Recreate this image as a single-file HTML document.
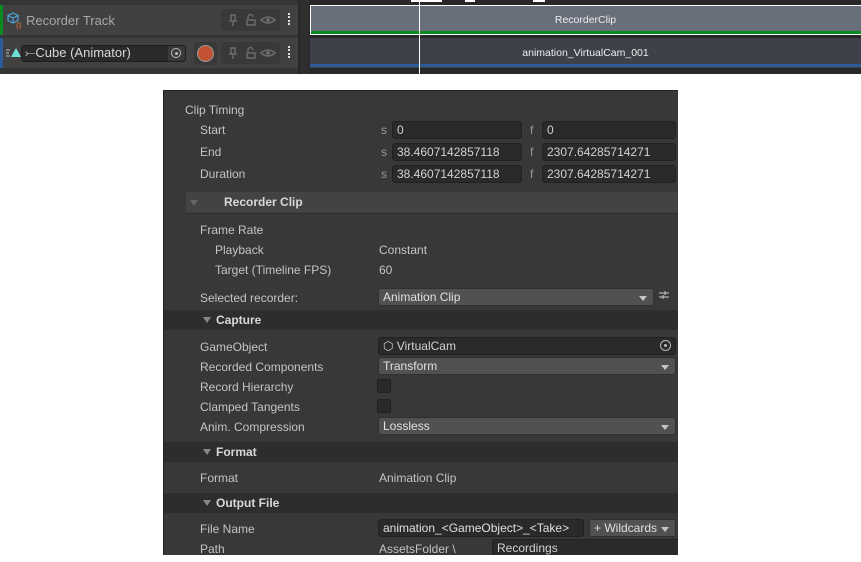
<!DOCTYPE html>
<html><head><style>
*{box-sizing:border-box;margin:0;padding:0}
body{width:861px;height:562px;background:#fff;position:relative;overflow:hidden;font-family:"Liberation Sans",sans-serif;font-size:12px;color:#c4c4c4}
.a{position:absolute}
.lbl{position:absolute;left:36px;white-space:nowrap}
.fld{position:absolute;background:#2a2a2a;border:1px solid #212121;border-radius:3px;height:18px;padding-left:4px;line-height:16px;color:#d2d2d2}
.dd{position:absolute;background:#515151;border:1px solid #303030;border-radius:3px;height:18px;padding-left:4px;line-height:16px;color:#e0e0e0}
.dd:after{content:"";position:absolute;right:6px;top:7px;border-left:4px solid transparent;border-right:4px solid transparent;border-top:5px solid #c4c4c4}
.hdr{position:absolute;left:0;width:514px;height:20px;background:#2d2d2d;font-weight:bold;color:#d8d8d8;line-height:20px;padding-left:52px}
.hdr:before{content:"";position:absolute;left:39px;top:7px;border-left:4px solid transparent;border-right:4px solid transparent;border-top:6px solid #888}
.cb{position:absolute;left:213px;width:14px;height:14px;background:#2a2a2a;border:1px solid #212121;border-radius:2px}
.btn{position:absolute;left:221px;width:59px;height:22px;background:#393939;border-radius:3px}
</style></head><body>
<div class="a" style="left:0;top:0;width:861px;height:74px;background:#282828"></div>
<div class="a" style="left:0;top:0;width:298px;height:74px;background:#353535"></div>
<div class="a" style="left:0;top:5px;width:298px;height:30px;background:#414141"></div>
<div class="a" style="left:0;top:5px;width:3px;height:30px;background:#0a8a1e"></div>
<div class="a" style="left:0;top:38px;width:298px;height:30px;background:#414141"></div>
<div class="a" style="left:0;top:38px;width:3px;height:30px;background:#2c5c98"></div>
<svg class="a" style="left:7px;top:11px" width="16" height="18"><path d="M6 2l5 2.5v5L6 12 1 9.5v-5z M1 4.5L6 7l5-2.5 M6 7v5" fill="none" stroke="#4ea4d8" stroke-width="1.2"/><text x="9" y="17" fill="#e36a3a" font-size="8">{}</text></svg>
<div class="a" style="left:26px;top:13px;font-size:13px;color:#a8a8a8">Recorder Track</div>
<div class="btn" style="top:9px"></div>
<svg class="a" style="left:221px;top:9px" width="59" height="22"><g fill="none" stroke="#6a6a6a" stroke-width="1.5"><path d="M9 6h6M10 6v6M14 6v6M8 12h8M12 12v5"/><path d="M27 10v-2a2.5 2.5 0 0 1 5 0M26 11h8v5h-8z"/><path d="M40 11q7-6 14 0q-7 6-14 0z"/></g><circle cx="47" cy="11" r="2" fill="#6a6a6a"/></svg>
<div class="a" style="left:288px;top:13px;width:2px;height:12px;border-left:2px dotted #ddd"></div>
<svg class="a" style="left:6px;top:46px" width="16" height="12"><path d="M0 4h4M0 7h3M0 10h4" stroke="#bbb"/><path d="M5 11L10 2l5 9z" fill="#6ee0d2"/></svg>
<div class="a" style="left:21px;top:45px;width:165px;height:17px;background:#2a2a2a;border:1px solid #1e1e1e;border-radius:3px"></div>
<div class="a" style="left:25px;top:45px;font-size:13px;color:#d8d8d8">⤚Cube (Animator)</div>
<div class="a" style="left:168px;top:46px;width:17px;height:15px;background:#3a3a3a;border-radius:0 3px 3px 0"></div>
<div class="a" style="left:171px;top:48px;width:10px;height:10px;border:1.5px solid #bbb;border-radius:50%"></div>
<div class="a" style="left:174.5px;top:51.5px;width:3px;height:3px;background:#bbb;border-radius:50%"></div>
<div class="a" style="left:194px;top:42px;width:23px;height:23px;background:#393939;border-radius:3px"></div>
<div class="a" style="left:197px;top:45px;width:17px;height:17px;border:1.5px solid #999;border-radius:50%;background:#c35234"></div>
<div class="btn" style="top:42px"></div>
<svg class="a" style="left:221px;top:42px" width="59" height="22"><g fill="none" stroke="#6a6a6a" stroke-width="1.5"><path d="M9 6h6M10 6v6M14 6v6M8 12h8M12 12v5"/><path d="M27 10v-2a2.5 2.5 0 0 1 5 0M26 11h8v5h-8z"/><path d="M40 11q7-6 14 0q-7 6-14 0z"/></g><circle cx="47" cy="11" r="2" fill="#6a6a6a"/></svg>
<div class="a" style="left:288px;top:46px;width:2px;height:12px;border-left:2px dotted #ddd"></div>
<div class="a" style="left:300px;top:0;width:9px;height:74px;background:#2e2e2e"></div>
<div class="a" style="left:310px;top:5px;width:551px;height:30px;background:#686f7b;border:1px solid #fff;border-right:none"></div>
<div class="a" style="left:311px;top:31px;width:550px;height:3px;background:#0a8a1e"></div>
<div class="a" style="left:310px;top:14px;width:551px;text-align:center;font-size:10.5px;color:#eee">RecorderClip</div>
<div class="a" style="left:310px;top:38px;width:551px;height:30px;background:#3e4149"></div>
<div class="a" style="left:310px;top:64px;width:551px;height:3px;background:#2c5c98"></div>
<div class="a" style="left:310px;top:47px;width:551px;text-align:center;font-size:10.5px;color:#eee">animation_VirtualCam_001</div>
<div class="a" style="left:419px;top:0;width:1px;height:74px;background:#fff"></div>
<div class="a" style="left:411px;top:0;width:31px;height:2px;background:#fff"></div>
<div class="a" style="left:465px;top:0;width:10px;height:2px;background:#fff"></div>
<div class="a" style="left:533px;top:0;width:12px;height:2px;background:#fff"></div>

<div class="a" style="left:163px;top:90px;width:515px;height:465px;background:#383838;border-left:1px solid #222;border-top:1px solid #222;overflow:hidden">
 <div class="lbl" style="left:21px;top:12px">Clip Timing</div>
 <div class="lbl" style="top:32px">Start</div>
 <div class="lbl" style="top:54px">End</div>
 <div class="lbl" style="top:76px">Duration</div>
 <div class="lbl" style="left:217px;top:32px;color:#999">s</div>
 <div class="lbl" style="left:217px;top:54px;color:#999">s</div>
 <div class="lbl" style="left:217px;top:76px;color:#999">s</div>
 <div class="lbl" style="left:366px;top:32px;color:#999">f</div>
 <div class="lbl" style="left:366px;top:54px;color:#999">f</div>
 <div class="lbl" style="left:366px;top:76px;color:#999">f</div>
 <div class="fld" style="left:228px;top:30px;width:130px">0</div>
 <div class="fld" style="left:378px;top:30px;width:134px">0</div>
 <div class="fld" style="left:228px;top:52px;width:130px">38.4607142857118</div>
 <div class="fld" style="left:378px;top:52px;width:134px">2307.64285714271</div>
 <div class="fld" style="left:228px;top:74px;width:130px">38.4607142857118</div>
 <div class="fld" style="left:378px;top:74px;width:134px">2307.64285714271</div>
 <div class="a" style="left:22px;top:101px;width:492px;height:22px;background:#434343;border-bottom:1px solid #2a2a2a;font-weight:bold;color:#d8d8d8;line-height:20px;padding-left:38px">Recorder Clip</div>
 <div class="a" style="left:26px;top:109px;border-left:4px solid transparent;border-right:4px solid transparent;border-top:6px solid #666"></div>
 <div class="lbl" style="top:132px">Frame Rate</div>
 <div class="lbl" style="left:51px;top:152px">Playback</div>
 <div class="lbl" style="left:215px;top:152px">Constant</div>
 <div class="lbl" style="left:51px;top:172px">Target (Timeline FPS)</div>
 <div class="lbl" style="left:215px;top:172px">60</div>
 <div class="lbl" style="top:200px">Selected recorder:</div>
 <div class="dd" style="left:214px;top:197px;width:276px">Animation Clip</div>
 <svg class="a" style="left:495px;top:199px" width="10" height="10"><path d="M0 3h10M0 7h10M6 1v4M4 5v4" stroke="#ccc" stroke-width="1"/></svg>
 <div class="hdr" style="top:219px">Capture</div>
 <div class="lbl" style="top:249px">GameObject</div>
 <div class="fld" style="left:214px;top:246px;width:298px">⬡ VirtualCam</div>
 <div class="a" style="left:496px;top:249px;width:11px;height:11px;border:1.5px solid #bbb;border-radius:50%"></div>
 <div class="a" style="left:500px;top:253px;width:3px;height:3px;background:#bbb;border-radius:50%"></div>
 <div class="lbl" style="top:269px">Recorded Components</div>
 <div class="dd" style="left:214px;top:266px;width:298px">Transform</div>
 <div class="lbl" style="top:289px">Record Hierarchy</div>
 <div class="cb" style="top:288px"></div>
 <div class="lbl" style="top:309px">Clamped Tangents</div>
 <div class="cb" style="top:308px"></div>
 <div class="lbl" style="top:329px">Anim. Compression</div>
 <div class="dd" style="left:214px;top:326px;width:298px">Lossless</div>
 <div class="hdr" style="top:351px">Format</div>
 <div class="lbl" style="top:380px">Format</div>
 <div class="lbl" style="left:215px;top:380px">Animation Clip</div>
 <div class="hdr" style="top:402px">Output File</div>
 <div class="lbl" style="top:431px">File Name</div>
 <div class="fld" style="left:214px;top:428px;width:206px;color:#e0e0e0">animation_&lt;GameObject&gt;_&lt;Take&gt;</div>
 <div class="dd" style="left:425px;top:428px;width:87px">+ Wildcards</div>
 <div class="lbl" style="top:451px">Path</div>
 <div class="lbl" style="left:215px;top:451px">AssetsFolder \</div>
 <div class="fld" style="left:328px;top:448px;width:190px">Recordings</div>
</div>
</body></html>
